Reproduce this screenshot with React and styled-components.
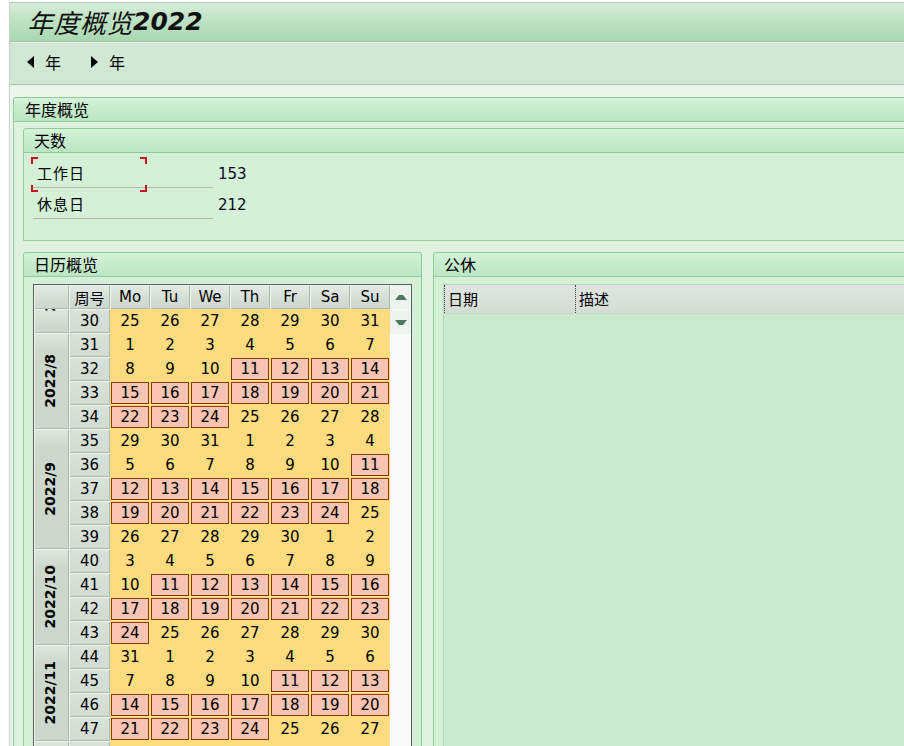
import React from "react";
import styled, { createGlobalStyle } from "styled-components";

const GlobalStyle = createGlobalStyle`
  html, body {
    margin: 0;
    padding: 0;
    background: #ffffff;
    overflow: hidden;
  }
  body {
    font-family: "Noto Sans CJK SC", "DejaVu Sans", sans-serif;
    color: #000;
  }
`;

// Calendar data
const WEEKDAYS = ["Mo", "Tu", "We", "Th", "Fr", "Sa", "Su"];
const LAST_SHOWN_WEEK = 47;

const weeks = [];
for (let w = 30; w <= 50; w++) {
  const days = [];
  for (let d = 0; d < 7; d++) {
    const dt = new Date(2022, 6, 25 + (w - 30) * 7 + d);
    days.push(dt.getDate());
  }
  weeks.push({ no: w, days, blank: w > LAST_SHOWN_WEEK });
}

const months = [
  { label: "2022/7", from: 30, to: 30, hiddenRows: 3 },
  { label: "2022/8", from: 31, to: 34 },
  { label: "2022/9", from: 35, to: 39 },
  { label: "2022/10", from: 40, to: 43 },
  { label: "2022/11", from: 44, to: 47 },
  { label: "", from: 48, to: 50 },
];

const isHoliday = (day) => day >= 11 && day <= 24;

function Arrow({ dir }) {
  return <ArrowShape $dir={dir} />;
}

function App() {
  return (
    <>
      <GlobalStyle />
      <Page>
        <Frame>
          <TitleBar>
            <TitleCn>年度概览</TitleCn>
            <TitleNum>2022</TitleNum>
          </TitleBar>

          <Toolbar>
            <ToolButton>
              <Arrow dir="left" />
              年
            </ToolButton>
            <ToolButton>
              <Arrow dir="right" />
              年
            </ToolButton>
          </Toolbar>

          <Content>
            <Panel>
              <PanelHeader>年度概览</PanelHeader>
              <PanelBody>
                <Group>
                  <GroupHeader>天数</GroupHeader>
                  <FieldsBody>
                    <FieldRow>
                      <FocusFrame>
                        <Corner $pos="tl" />
                        <Corner $pos="tr" />
                        <Corner $pos="bl" />
                        <Corner $pos="br" />
                      </FocusFrame>
                      <FieldLabel>工作日</FieldLabel>
                      <FieldValue>153</FieldValue>
                    </FieldRow>
                    <FieldRow>
                      <FieldLabel>休息日</FieldLabel>
                      <FieldValue>212</FieldValue>
                    </FieldRow>
                  </FieldsBody>
                </Group>

                <BottomRow>
                  <CalendarGroup>
                    <GroupHeader>日历概览</GroupHeader>
                    <CalendarBody>
                      <Calendar>
                        <CalGrid>
                          <HeadCell $row={1} $col={1} />
                          <HeadCell $row={1} $col={2}>
                            周号
                          </HeadCell>
                          {WEEKDAYS.map((d, i) => (
                            <HeadCell key={d} $row={1} $col={i + 3} $latin>
                              {d}
                            </HeadCell>
                          ))}

                          {months.map((m) => (
                            <MonthCell
                              key={m.from}
                              $row={m.from - 30 + 2}
                              $span={m.to - m.from + 1}
                            >
                              {m.label && (
                                <MonthInner $hidden={m.hiddenRows || 0}>
                                  <MonthText>{m.label}</MonthText>
                                </MonthInner>
                              )}
                            </MonthCell>
                          ))}

                          {weeks.map((wk) => (
                            <React.Fragment key={wk.no}>
                              <WeekCell $row={wk.no - 30 + 2}>
                                {!wk.blank && wk.no}
                              </WeekCell>
                              {wk.days.map((day, i) => (
                                <DayCell
                                  key={i}
                                  $row={wk.no - 30 + 2}
                                  $col={i + 3}
                                >
                                  {!wk.blank && (
                                    <DayMark $holiday={isHoliday(day)}>
                                      {day}
                                    </DayMark>
                                  )}
                                </DayCell>
                              ))}
                            </React.Fragment>
                          ))}
                        </CalGrid>
                        <ScrollBar>
                          <ScrollButton>
                            <ScrollArrow $dir="up" />
                          </ScrollButton>
                          <ScrollButton>
                            <ScrollArrow $dir="down" />
                          </ScrollButton>
                        </ScrollBar>
                      </Calendar>
                    </CalendarBody>
                  </CalendarGroup>

                  <HolidayGroup>
                    <GroupHeader>公休</GroupHeader>
                    <HolidayBody>
                      <HolidayTable>
                        <TableHead>
                          <HeadColumn $width="131px">日期</HeadColumn>
                          <HeadColumn>描述</HeadColumn>
                        </TableHead>
                      </HolidayTable>
                    </HolidayBody>
                  </HolidayGroup>
                </BottomRow>
              </PanelBody>
            </Panel>
          </Content>
        </Frame>
      </Page>
    </>
  );
}

export default App;

const Page = styled.div`
  width: 904px;
  height: 746px;
  overflow: hidden;
  box-sizing: border-box;
  padding: 2px 0 0 9px;
  display: flex;
`;

const Frame = styled.div`
  flex: none;
  width: 940px;
  display: flex;
  flex-direction: column;
  border-left: 1px solid #c4d4c6;
  border-top: 1px solid #b6c8b8;
  min-height: 0;
`;

const TitleBar = styled.div`
  flex: none;
  height: 38px;
  display: flex;
  align-items: center;
  padding-left: 17px;
  background: linear-gradient(#d8edda, #c3e4c8 35%, #a9d8b1);
  border-bottom: 1px solid #a8c1ab;
  font-style: italic;
`;

const TitleCn = styled.span`
  font-family: "Noto Sans CJK SC", sans-serif;
  font-size: 26px;
  line-height: 38px;
  letter-spacing: 0.5px;
  color: #111;
`;

const TitleNum = styled.span`
  font-family: "DejaVu Sans", sans-serif;
  font-weight: bold;
  font-size: 25px;
  line-height: 38px;
  color: #111;
`;

const Toolbar = styled.div`
  flex: none;
  height: 41px;
  display: flex;
  align-items: center;
  gap: 30px;
  padding-left: 17px;
  background: #d0e8d3;
  border-top: 1px solid #e4f1e6;
  border-bottom: 1px solid #a7c3ab;
`;

const ToolButton = styled.div`
  display: flex;
  align-items: center;
  gap: 11px;
  font-size: 16px;
  line-height: 20px;
  margin-top: -3px;
`;

const ArrowShape = styled.span`
  width: 0;
  height: 0;
  border-top: 6px solid transparent;
  border-bottom: 6px solid transparent;
  ${(p) =>
    p.$dir === "left"
      ? "border-right: 7px solid #000;"
      : "border-left: 7px solid #000;"}
`;

const Content = styled.div`
  flex: 1;
  min-height: 0;
  display: flex;
  flex-direction: column;
  background: #ecf5ec;
  padding: 12px 0 0 3px;
`;

const Panel = styled.div`
  flex: 1;
  min-height: 0;
  display: flex;
  flex-direction: column;
  background: #dff2e0;
  border: 1px solid #8fcb9b;
  border-bottom: none;
  border-radius: 3px 0 0 0;
`;

const headerGradient = "linear-gradient(#d6f2d9, #c9eccf 40%, #bbe7c4)";

const PanelHeader = styled.div`
  flex: none;
  height: 23px;
  line-height: 22px;
  padding-left: 11px;
  font-size: 16px;
  background: ${headerGradient};
  border-bottom: 1px solid #8fcb9b;
  border-radius: 3px 0 0 0;
`;

const PanelBody = styled.div`
  flex: 1;
  min-height: 0;
  display: flex;
  flex-direction: column;
  gap: 11px;
  padding: 6px 0 0 9px;
`;

const Group = styled.div`
  flex: none;
  display: flex;
  flex-direction: column;
  background: #d4f0d6;
  border: 1px solid #8fcb9b;
  border-radius: 3px 3px 0 0;
`;

const GroupHeader = styled.div`
  flex: none;
  height: 23px;
  line-height: 23px;
  padding-left: 10px;
  font-size: 16px;
  background: ${headerGradient};
  border-bottom: 1px solid #8fcb9b;
  border-radius: 3px 3px 0 0;
`;

const FieldsBody = styled.div`
  height: 87px;
  box-sizing: border-box;
  padding: 4px 0 0 9px;
  display: flex;
  flex-direction: column;
`;

const FieldRow = styled.div`
  position: relative;
  display: flex;
  align-items: center;
  height: 31px;
`;

const FieldLabel = styled.div`
  box-sizing: border-box;
  width: 180px;
  height: 31px;
  line-height: 32px;
  padding-left: 4px;
  font-size: 15px;
  letter-spacing: 1px;
  border-bottom: 1px solid #b4b8b4;
`;

const FieldValue = styled.div`
  margin-left: 5px;
  padding-top: 3px;
  font-family: "DejaVu Sans", sans-serif;
  font-size: 15px;
  color: #0a0a1e;
`;

const FocusFrame = styled.div`
  position: absolute;
  left: -2px;
  top: 0;
  width: 116px;
  height: 35px;
  pointer-events: none;
`;

const Corner = styled.span`
  position: absolute;
  width: 5px;
  height: 5px;
  border: 0 solid #c8141e;
  ${(p) => (p.$pos[0] === "t" ? "top: 0; border-top-width: 2px;" : "bottom: 0; border-bottom-width: 2px;")}
  ${(p) => (p.$pos[1] === "l" ? "left: 0; border-left-width: 2px;" : "right: 0; border-right-width: 2px;")}
`;

const BottomRow = styled.div`
  flex: 1;
  min-height: 0;
  display: flex;
  gap: 11px;
  overflow: hidden;
`;

const CalendarGroup = styled(Group)`
  flex: none;
  width: 399px;
  box-sizing: border-box;
  border-bottom: none;
`;

const CalendarBody = styled.div`
  flex: 1;
  min-height: 0;
  padding: 7px 9px 0 9px;
  overflow: hidden;
`;

const Calendar = styled.div`
  display: flex;
  border: 1px solid #5b605b;
  border-bottom: none;
  background: #fafafa;
`;

const CalGrid = styled.div`
  display: grid;
  grid-template-columns: 35px 41px repeat(7, 40px);
  grid-auto-rows: 24px;
`;

const raised = `
  box-shadow: inset 1px 1px 0 #eef3ee, inset -1px -1px 0 #a7bca9;
`;

const HeadCell = styled.div`
  grid-row: ${(p) => p.$row};
  grid-column: ${(p) => p.$col};
  display: flex;
  align-items: center;
  justify-content: center;
  background: linear-gradient(#e6eae6, #d6dfd7 50%, #cbd6cc);
  ${raised}
  font-family: ${(p) =>
    p.$latin ? '"DejaVu Sans", sans-serif' : '"Noto Sans CJK SC", sans-serif'};
  font-size: 15px;
`;

const MonthCell = styled.div`
  grid-column: 1;
  grid-row: ${(p) => p.$row} / span ${(p) => p.$span};
  overflow: hidden;
  background: linear-gradient(#dfe5df, #cdd8cd 18px, #cbd7cb);
  ${raised}
`;

const MonthInner = styled.div`
  height: calc(100% + ${(p) => p.$hidden * 24}px);
  margin-top: ${(p) => -p.$hidden * 24}px;
  display: flex;
  align-items: center;
  justify-content: center;
  padding-right: 3px;
  box-sizing: border-box;
`;

const MonthText = styled.span`
  writing-mode: vertical-rl;
  transform: rotate(180deg);
  font-family: "DejaVu Sans", sans-serif;
  font-weight: bold;
  font-size: 14px;
`;

const WeekCell = styled.div`
  grid-row: ${(p) => p.$row};
  grid-column: 2;
  display: flex;
  align-items: center;
  justify-content: center;
  background: linear-gradient(#dae2da, #d0dbd1);
  ${raised}
  font-family: "DejaVu Sans", sans-serif;
  font-size: 15px;
`;

const DayCell = styled.div`
  grid-row: ${(p) => p.$row};
  grid-column: ${(p) => p.$col};
  display: flex;
  align-items: center;
  justify-content: center;
  background: #fddc80;
`;

const DayMark = styled.span`
  box-sizing: border-box;
  width: 38px;
  height: 22px;
  display: flex;
  align-items: center;
  justify-content: center;
  font-family: "DejaVu Sans", sans-serif;
  font-size: 15px;
  color: #000;
  border: 1px solid ${(p) => (p.$holiday ? "#86390d" : "transparent")};
  background: ${(p) => (p.$holiday ? "#f9c4b1" : "transparent")};
`;

const ScrollBar = styled.div`
  width: 21px;
  display: flex;
  flex-direction: column;
  background: #fafafa;
`;

const ScrollButton = styled.div`
  height: 24px;
  display: flex;
  align-items: center;
  justify-content: center;
  background: #eef3ef;
  border-bottom: 1px solid #f8f8f8;
`;

const ScrollArrow = styled.span`
  width: 4px;
  height: 0;
  border-left: 4px solid transparent;
  border-right: 4px solid transparent;
  ${(p) =>
    p.$dir === "up"
      ? "border-bottom: 5px solid #4d7a5c;"
      : "border-top: 5px solid #4d7a5c;"}
`;

const HolidayGroup = styled(Group)`
  flex: 1;
  border-bottom: none;
`;

const HolidayBody = styled.div`
  flex: 1;
  min-height: 0;
  display: flex;
  padding: 7px 0 0 9px;
`;

const HolidayTable = styled.div`
  flex: 1;
  background: #cbe9cf;
  border-left: 1px solid #b6d6ba;
  border-top: 1px solid #b6d6ba;
`;

const TableHead = styled.div`
  display: flex;
  height: 28px;
  background: linear-gradient(#e1e5e1, #d3ddd4);
  border-bottom: 1px solid #c4d6c6;
`;

const HeadColumn = styled.div`
  box-sizing: border-box;
  width: ${(p) => p.$width || "auto"};
  flex: ${(p) => (p.$width ? "none" : "1")};
  border-left: 1px dotted #444;
  padding-left: 3px;
  line-height: 28px;
  font-size: 15px;
`;
